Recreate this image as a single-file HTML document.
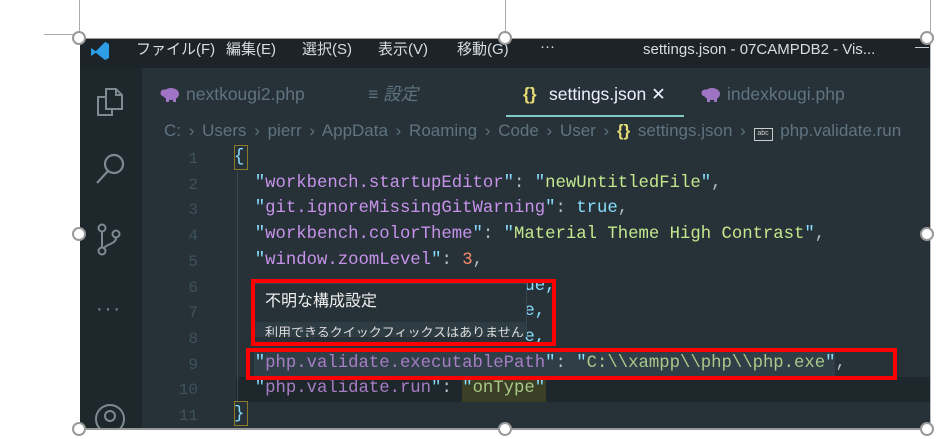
<!DOCTYPE html>
<html><head><meta charset="utf-8"><style>
*{margin:0;padding:0;box-sizing:border-box}
body{width:937px;height:439px;background:#fff;position:relative;overflow:hidden;font-family:"Liberation Sans","Noto Sans CJK JP",sans-serif}
.abs{position:absolute}
#img{left:80px;top:39px;width:851px;height:390px;background:#263238;overflow:hidden}
#title{left:0;top:0;width:851px;height:29px;background:#1c2429;color:#d8dde0;font-size:15px;line-height:22px}
#act{left:0;top:29px;width:62px;height:361px;background:#1e272c}
.tab{font-size:17.5px;color:#5f7480;top:44px;line-height:22px}
.crumb{top:81px;font-size:17px;color:#5f7480;line-height:22px;left:84px;white-space:pre;word-spacing:3px}
.ln{left:84px;width:34px;text-align:right;font-family:"Liberation Mono",monospace;font-size:16px;color:#3e525c}
.code{font-family:"Liberation Mono",monospace;font-size:17.3px;white-space:pre;left:176px}
.p{color:#c792ea}.q{color:#89ddff}.g{color:#c3e88d}.o{color:#f78c6c}.w{color:#b0bec5}
.h{border-radius:50%;width:14px;height:14px;border:2.5px solid #999;background:#fff;position:absolute}
</style></head><body>
<div class="abs" style="left:79px;top:0;width:1px;height:38px;background:#aaa"></div>
<div class="abs" style="left:505px;top:0;width:1px;height:38px;background:#aaa"></div>
<div class="abs" style="left:930px;top:0;width:1px;height:38px;background:#aaa"></div>
<div class="abs" style="left:44px;top:34px;width:36px;height:1px;background:#aaa"></div>
<div class="abs" id="img">
 <div class="abs" id="title">
  <svg class="abs" style="left:9px;top:2px" width="22" height="20" viewBox="0 0 22 20"><path d="M2 7 L8 11 L2 15 Z M16 1 L20 3 V17 L16 19 L6 11 Z" fill="#2d9de6"/></svg>
  <span class="abs" style="left:56px;top:0">ファイル(F)</span>
  <span class="abs" style="left:146px;top:0">編集(E)</span>
  <span class="abs" style="left:222px;top:0">選択(S)</span>
  <span class="abs" style="left:298px;top:0">表示(V)</span>
  <span class="abs" style="left:377px;top:0">移動(G)</span>
  <span class="abs" style="left:460px;top:-3px">···</span>
  <span class="abs" style="left:563px;top:0">settings.json - 07CAMPDB2 - Vis...</span>
  <div class="abs" style="left:835px;top:8px;width:14px;height:1px;background:#ccc"></div>
 </div>
 <div class="abs" id="act">
  <svg class="abs" style="left:14px;top:17px" width="32" height="36" viewBox="0 0 32 36" fill="none" stroke="#7d8a90" stroke-width="2"><path d="M12 4h10l6 6v14H12Z M22 4v6h6"/><path d="M12 12H4v18h14v-6"/></svg>
  <svg class="abs" style="left:14px;top:83px" width="34" height="36" viewBox="0 0 34 36" fill="none" stroke="#7d8a90" stroke-width="2.2"><circle cx="20" cy="13" r="9"/><path d="M14 20L3 32"/></svg>
  <svg class="abs" style="left:14px;top:154px" width="30" height="36" viewBox="0 0 30 36" fill="none" stroke="#7d8a90" stroke-width="2"><circle cx="8" cy="6" r="3.5"/><circle cx="8" cy="29" r="3.5"/><circle cx="22" cy="12" r="3.5"/><path d="M8 10v15 M22 16c0 6-10 6-13 11"/></svg>
  <div class="abs" style="left:16px;top:230px;color:#7d8a90;font-size:20px;letter-spacing:2px">···</div>
  <svg class="abs" style="left:14px;top:335px" width="34" height="30" viewBox="0 0 34 30" fill="none" stroke="#7d8a90" stroke-width="2"><circle cx="16" cy="16" r="14"/><circle cx="16" cy="13" r="5"/></svg>
 </div>
 <svg class="abs" style="left:80px;top:48px" width="20" height="16" viewBox="0 0 20 16"><ellipse cx="11" cy="7" rx="8" ry="6" fill="#a074c4"/><circle cx="4" cy="6" r="3.5" fill="#a074c4"/><rect x="6" y="10" width="3" height="5" fill="#a074c4"/><rect x="13" y="10" width="3" height="5" fill="#a074c4"/></svg>
 <span class="abs tab" style="left:106px">nextkougi2.php</span>
 <span class="abs tab" style="left:288px;font-style:italic">≡ 設定</span>
 <span class="abs tab" style="left:443px;color:#e6db74;font-weight:bold">{}</span>
 <span class="abs tab" style="left:469px;color:#eef">settings.json ✕</span>
 <div class="abs" style="left:426px;top:76px;width:178px;height:2px;background:#80cbc4"></div>
 <svg class="abs" style="left:621px;top:48px" width="20" height="16" viewBox="0 0 20 16"><ellipse cx="11" cy="7" rx="8" ry="6" fill="#a074c4"/><circle cx="4" cy="6" r="3.5" fill="#a074c4"/><rect x="6" y="10" width="3" height="5" fill="#a074c4"/><rect x="13" y="10" width="3" height="5" fill="#a074c4"/></svg>
 <span class="abs tab" style="left:647px">indexkougi.php</span>
 <div class="abs crumb">C: › Users › pierr › AppData › Roaming › Code › User › <span style="color:#e6db74;font-weight:bold">{}</span> settings.json › <span style="display:inline-block;width:19px;height:13px;border:1.5px solid #ccc;font-size:7px;line-height:10px;color:#ccc;vertical-align:1px;text-align:center;word-spacing:0">abc</span> php.validate.run</div>
 <div class="abs" style="left:156px;top:338px;width:695px;height:25px;background:#1e272c"></div>
 <div class="abs" style="left:174px;top:313px;width:581px;height:25px;background:#2f3e47"></div>
 <div class="abs" style="left:382px;top:339px;width:84px;height:24px;background:#3a3f26"></div>
 <div class="abs" style="left:154px;top:106px;width:14px;height:25px;border:1px solid #8a7a2a"></div>
 <div class="abs" style="left:154px;top:362px;width:14px;height:25px;border:1px solid #8a7a2a"></div>
 <div class="abs" style="left:157px;top:132px;width:1px;height:230px;background:#37474f"></div>
 <div class="abs ln" style="top:108px;line-height:25.7px">1<br>2<br>3<br>4<br>5<br>6<br>7<br>8<br>9<br>10<br>11</div>
 <div class="abs code" style="left:154px;top:106px;line-height:25.7px"><span class="q">{</span>
  <span class="q">"</span><span class="p">workbench.startupEditor</span><span class="q">"</span><span class="w">:</span> <span class="q">"</span><span class="g">newUntitledFile</span><span class="q">"</span><span class="w">,</span>
  <span class="q">"</span><span class="p">git.ignoreMissingGitWarning</span><span class="q">"</span><span class="w">:</span> <span class="q">true</span><span class="w">,</span>
  <span class="q">"</span><span class="p">workbench.colorTheme</span><span class="q">"</span><span class="w">:</span> <span class="q">"</span><span class="g">Material Theme High Contrast</span><span class="q">"</span><span class="w">,</span>
  <span class="q">"</span><span class="p">window.zoomLevel</span><span class="q">"</span><span class="w">:</span> <span class="o">3</span><span class="w">,</span>
                            <span class="q">ue,</span>
                            <span class="q">e,</span>
                            <span class="q">e,</span>
  <span class="q">"</span><span class="p" style="color:#a77ec4">php.validate.executablePath</span><span class="q">"</span><span class="w">:</span> <span class="q">"</span><span class="g" style="color:#a9c889">C:\\xampp\\php\\php.exe</span><span class="q">"</span><span class="w">,</span>
  <span class="q">"</span><span class="p" style="color:#a77ec4">php.validate.run</span><span class="q">"</span><span class="w">:</span> <span class="q">"</span><span class="g" style="color:#a9c889">onType</span><span class="q">"</span>
<span class="q">}</span></div>
 <div class="abs" style="left:174px;top:244px;width:273px;height:54px;background:#263238;border:1px solid #36464e">
  <div style="height:38px;background:#263238;color:#eee;font-size:16px;line-height:36px;padding-left:10px">不明な構成設定</div>
  <div style="height:15px;background:#2e3c44;color:#ddd;font-size:13px;line-height:22px;padding-left:10px;overflow:hidden;white-space:nowrap">利用できるクイックフィックスはありません</div>
 </div>
</div>
<div class="abs" style="left:251px;top:279px;width:305px;height:67px;border:4px solid #f00"></div>
<div class="abs" style="left:246px;top:348px;width:651px;height:32px;border:4px solid #f00"></div>
<div class="abs" style="left:80px;top:38px;width:851px;height:1px;background:#999"></div>
<div class="abs" style="left:80px;top:428px;width:851px;height:2px;background:#999"></div>
<div class="abs" style="left:930px;top:38px;width:1px;height:391px;background:#bbb"></div>
<div class="h" style="left:72px;top:31px"></div>
<div class="h" style="left:498px;top:31px"></div>
<div class="h" style="left:920px;top:31px"></div>
<div class="h" style="left:72px;top:227px"></div>
<div class="h" style="left:920px;top:227px"></div>
<div class="h" style="left:72px;top:422px"></div>
<div class="h" style="left:498px;top:422px"></div>
<div class="h" style="left:920px;top:422px"></div>
</body></html>
